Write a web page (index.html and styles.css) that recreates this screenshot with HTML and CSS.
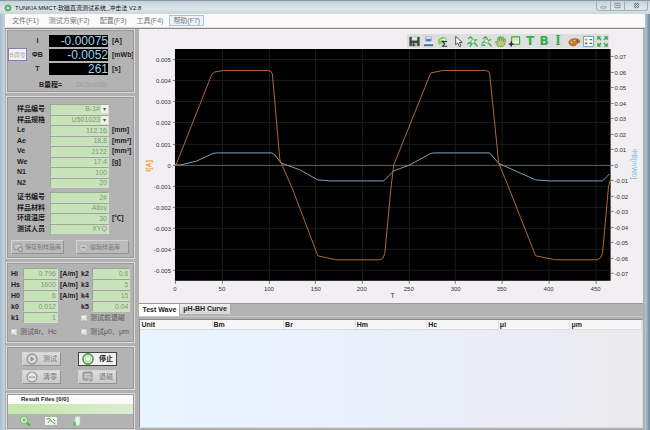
FILE: index.html
```html
<!DOCTYPE html>
<html lang="zh-CN">
<head>
<meta charset="utf-8">
<title>TUNKIA MMCT</title>
<link rel="stylesheet" href="styles.css">
</head>
<body>
<div class="window">
  <header class="titlebar">
    <svg class="logo" viewBox="0 0 10 10" aria-hidden="true"><circle cx="5" cy="5" r="2.6" fill="none" stroke="#4fa857" stroke-width="1.8"/><path d="M5 0v2M5 8v2M0 5h2M8 5h2M1.4 1.4l1.5 1.5M7.1 7.1l1.5 1.5M1.4 8.6l1.5-1.5M7.1 2.9l1.5-1.5" stroke="#4fa857" stroke-width="1.3"/></svg>
    <h1>TUNKIA MMCT-软磁直流测试系统_冲击法 V2.8</h1>
    <div class="winctl">
      <button aria-label="Minimize"><svg viewBox="0 0 8 8"><path d="M1 5.5h6v1.5H1z" fill="#fff" stroke="#777" stroke-width=".7"/></svg></button>
      <button aria-label="Maximize"><svg viewBox="0 0 8 8"><path d="M1.2 1.5h5.6v5H1.2zM3 3.2h2v1.6H3z" fill="#fff" stroke="#666" stroke-width=".8"/></svg></button>
      <button class="close" aria-label="Close"><svg viewBox="0 0 8 8"><path d="M1.5 1.5l5 5M6.5 1.5l-5 5" stroke="#666" stroke-width="2.4"/><path d="M1.5 1.5l5 5M6.5 1.5l-5 5" stroke="#fff" stroke-width=".9"/></svg></button>
    </div>
  </header>
  <nav class="menu">
    <button>文件(F1)</button><button>测试方案(F2)</button><button>配置(F3)</button><button>工具(F4)</button><button class="hot">帮助(F7)</button>
  </nav>
  <main class="work">
    <aside class="side">
      <section class="panel meters">
        <button class="zero">B调零</button>
        <div class="meter-grid">
          <span>I</span><output>-0.00075</output><b>[A]</b>
          <span>ΦB</span><output>-0.0052</output><b>[mWb]</b>
          <span>T</span><output>261</output><b>[s]</b>
        </div>
        <div class="range"><b>B量程=</b><span>DC5mWb</span></div>
      </section>

      <section class="panel sample">
        <div class="fields eight">
          <label for="f1">样品编号</label><span class="drop"><select id="f1"><option>B-1#</option></select></span><b></b>
          <label for="f2">样品规格</label><span class="drop"><select id="f2"><option>U501023</option></select></span><b></b>
          <label for="f3">Le</label><input id="f3" value="112.16"><b>[mm]</b>
          <label for="f4">Ae</label><input id="f4" value="18.8"><b>[mm²]</b>
          <label for="f5">Ve</label><input id="f5" value="2122"><b>[mm³]</b>
          <label for="f6">We</label><input id="f6" value="17.4"><b>[g]</b>
          <label for="f7">N1</label><input id="f7" value="100"><b></b>
          <label for="f8">N2</label><input id="f8" value="20"><b></b>
        </div>
        <div class="fields four">
          <label for="g1">证书编号</label><input id="g1" value="2#"><b></b>
          <label for="g2">样品材料</label><input id="g2" value="Alloy"><b></b>
          <label for="g3">环境温度</label><input id="g3" value="30"><b>[℃]</b>
          <label for="g4">测试人员</label><input id="g4" value="XYQ"><b></b>
        </div>
        <div class="pair">
          <button class="btn small"><svg viewBox="0 0 12 12"><rect x="1" y="2" width="8" height="6" rx="1" fill="#c8c8c8" stroke="#909090"/><circle cx="8" cy="8" r="2.5" fill="#bbb" stroke="#8c8c8c"/></svg>保存到样品库</button>
          <button class="btn small"><svg viewBox="0 0 12 12"><circle cx="6" cy="6" r="4.8" fill="#c6c6c6" stroke="#aaa"/><path d="M4 5.5h4v1.2H4z" fill="#888"/></svg>编辑样品库</button>
        </div>
      </section>

      <section class="panel coef">
        <div class="coef-grid">
          <label for="h1">Hi</label><input id="h1" value="0.796"><b>[A/m]</b><label for="h2">k2</label><input id="h2" value="0.6">
          <label for="h3">Hs</label><input id="h3" value="1600"><b>[A/m]</b><label for="h4">k3</label><input id="h4" value="5">
          <label for="h5">H0</label><input id="h5" value="6"><b>[A/m]</b><label for="h6">k4</label><input id="h6" value="15">
          <label for="h7">k0</label><input id="h7" value="0.012"><b></b><label for="h8">k5</label><input id="h8" value="0.04">
          <label for="h9">k1</label><input id="h9" value="1"><b></b><label class="check span"><input type="checkbox" checked>测试前退磁</label>
        </div>
        <div class="checks">
          <label class="check"><input type="checkbox" checked>测试Br、Hc</label>
          <label class="check"><input type="checkbox" checked>测试μ0、μm</label>
        </div>
      </section>

      <section class="panel actions">
        <button class="btn"><svg viewBox="0 0 12 12"><circle cx="6" cy="6" r="5" fill="#d8d8d8" stroke="#979797" stroke-width="1.4"/><path d="M4.6 3.4L8.4 6 4.6 8.6z" fill="#8e8e8e"/></svg><span>测试</span></button>
        <button class="btn live"><svg viewBox="0 0 12 12"><circle cx="6" cy="6" r="5" fill="#fff" stroke="#51a548" stroke-width="1.8"/><rect x="3.8" y="3.8" width="4.4" height="4.4" fill="#fff" stroke="#8ccf83" stroke-width=".8"/></svg><span>停止</span></button>
        <button class="btn"><svg viewBox="0 0 12 12"><circle cx="6" cy="6" r="5" fill="#e3e3e3" stroke="#979797" stroke-width="1.2"/><path d="M3 5.4h1.6v1.4H3zM5.3 5.4h1.4v1.4H5.3zM7.4 5.4H9v1.4H7.4z" fill="#888"/></svg><span>清零</span></button>
        <button class="btn"><svg viewBox="0 0 12 12"><rect x="1" y="1" width="9" height="8" rx="1" fill="#aaa" stroke="#919191"/><path d="M2.5 3.5h6M2.5 6h6" stroke="#ddd"/><circle cx="9" cy="9" r="2.3" fill="#a5a5a5" stroke="#ddd" stroke-width=".6"/></svg><span>退磁</span></button>
      </section>

      <section class="panel files">
        <h2>Result Files [0/0]</h2>
        <div class="file-row"></div>
        <div class="file-tools">
          <button aria-label="Search"><svg viewBox="0 0 12 12"><path d="M7 7l4 3.5" stroke="#4caf50" stroke-width="2"/><circle cx="5" cy="5" r="3.6" fill="#e4f7df" stroke="#76c36d" stroke-width="1.4"/><path d="M5 3v4M3 5h4" stroke="#58ae52"/></svg></button>
          <button aria-label="Curve"><svg viewBox="0 0 12 12"><rect x="0" y="2" width="12" height="8" fill="#eaf5e4"/><path d="M1.5 4l3-.5L7 7l3.5 2M3 8l2-3M8 4l2 2" fill="none" stroke="#60a558"/></svg></button>
          <button aria-label="Copy"><svg viewBox="0 0 12 12"><path d="M4 2l5-1v9l-5 1z" fill="#e5f6e9" stroke="#9bceaa" stroke-width=".7"/><path d="M2 7h3v4H2z" fill="#67bd76"/></svg></button>
        </div>
      </section>
    </aside>

    <div class="content">
      <section class="chart">
        <div class="toolbar">
          <div class="group">
            <button aria-label="Save"><svg viewBox="0 0 14 14"><path d="M1.5 2h11v10h-11z" fill="#3a453c"/><path d="M4 2h6v4H4z" fill="#dfe6df"/><path d="M4 8.5h6V12H4z" fill="#a6b8a5"/><path d="M5 9h2v3H5z" fill="#2c352e"/></svg></button>
            <button aria-label="Print"><svg viewBox="0 0 14 14"><path d="M4 2h6v5H4z" fill="#fff" stroke="#777" stroke-width=".6"/><path d="M4.5 4h5v3h-5z" fill="#447bd0"/><path d="M1.5 7h11l-1 3h-9z" fill="#e3ebf3"/><path d="M2 10h10v2H2z" fill="#4669a0"/></svg></button>
            <button aria-label="Export"><svg viewBox="0 0 14 14"><path d="M2 5l4-3 5 1-1 5-7 3z" fill="#8fd079"/><path d="M3 8c1-4 3-4 5-4V2l3 3-3 3V6C6 6 5 6 3 8z" fill="#f7fff2" stroke="#4a963c" stroke-width=".6"/><path d="M12 7H7l2.5 2.5L7 12h5" fill="none" stroke="#26332a" stroke-width="1.1"/></svg></button>
          </div>
          <div class="group">
            <button aria-label="Pointer"><svg viewBox="0 0 14 14"><path d="M4 1.5v9l2.3-2 1.7 4 1.7-.8L8 8h3z" fill="#fff" stroke="#333" stroke-width=".9"/></svg></button>
            <button aria-label="Zoom in"><svg viewBox="0 0 14 14"><path d="M2 4l3-2 2 2M1.500 10l2.500-2 2 2-2 2.500M9 8.500l3.500 3.500M8 6l4-1" fill="none" stroke="#37b24c" stroke-width="1.500"/><circle cx="7.500" cy="7" r="2.100" fill="#d8f3d9" stroke="#54a65b" stroke-width=".8"/></svg></button>
            <button aria-label="Zoom out"><svg viewBox="0 0 14 14"><path d="M3 4l3-2 2 2M1.500 11h4M2 9l3-2M9 8.500l3.500 3.500M8 6l4-1" fill="none" stroke="#37b24c" stroke-width="1.500"/><circle cx="7" cy="6.500" r="2.100" fill="#d8f3d9" stroke="#54a65b" stroke-width=".8"/></svg></button>
            <button aria-label="Pan"><svg viewBox="0 0 14 14"><path d="M4 12L1.5 7.5l1-1L4 8V3l1.3-.5L6 6V1.6h1.4L8 6l.8-4L10 2.3V7l1-3 1.3.5L11.5 10l-2 2.5z" fill="#d3bf7c" stroke="#3fae50" stroke-width=".9"/></svg></button>
            <button aria-label="Select region"><svg viewBox="0 0 14 14"><path d="M4 2h8.5v8H4z" fill="#e7f7d9" stroke="#4a9846" stroke-width="1.2"/><path d="M5.5 3.5h5.5V6H5.5z" fill="#c5e8b0"/><path d="M3.5 7v5.5M.8 9.8h5.5" stroke="#222" stroke-width="1.5"/></svg></button>
          </div>
          <div class="group letters">
            <button class="sans">T</button><button class="sans">B</button><button class="serif">I</button>
          </div>
          <div class="group">
            <button aria-label="Palette"><svg viewBox="0 0 14 14"><path d="M1 8c0-3 4-4.5 8-4 4 .6 5 3.500 2.500 4.500-1.500.5-2 0-2.500 1.500-.6 2-2.500 2-4.500 1.600C2.500 11 1 10 1 8z" fill="#b97b2c" stroke="#80521d" stroke-width=".6"/><circle cx="4" cy="8" r="1" fill="#e8d489"/><circle cx="7" cy="6" r="1" fill="#efd69b"/><circle cx="10" cy="6.500" r=".9" fill="#654119"/></svg></button>
            <button aria-label="Legend"><svg viewBox="0 0 14 14"><path d="M1.500 1.500h11v11h-11z" fill="#fff" stroke="#55a5a0"/><path d="M3 4h3v2H3z" fill="#e99b34"/><path d="M3 8h3v2H3z" fill="#4a83cf"/><path d="M8 5h3M8 9h3" stroke="#476" stroke-width="1.200"/></svg></button>
            <button aria-label="Fit"><svg viewBox="0 0 14 14"><path d="M2 5V2h3M9 2h3v3M12 9v3H9M5 12H2V9M2.500 2.500l3 3M11.500 2.500l-3 3M11.500 11.500l-3-3M2.500 11.500l3-3" fill="none" stroke="#35ad51" stroke-width="1.500"/></svg></button>
          </div>
        </div>
        <svg class="plot" viewBox="139 48 504 255" role="img" aria-label="Test Wave">
          <rect x="175" y="49" width="436" height="232" fill="#000"/>
          <path class="grid" d="M222.500 49v232M269.500 49v232M315.500 49v232M362.500 49v232M409.500 49v232M455.500 49v232M502.500 49v232M549.500 49v232M596.500 49v232M175 59.500h436M175 80.500h436M175 101.500h436M175 122.500h436M175 144.500h436M175 186.500h436M175 207.500h436M175 228.500h436M175 249.500h436M175 270.500h436"/>
          <path d="M175 165.500h436" stroke="#68682f"/>
          <path class="ticks" d="M173 59.500h2M173 80.500h2M173 101.500h2M173 122.500h2M173 144.500h2M173 165.500h2M173 186.500h2M173 207.500h2M173 228.500h2M173 249.500h2M173 270.500h2M175.500 281v3M222.500 281v3M269.500 281v3M315.500 281v3M362.500 281v3M409.500 281v3M455.500 281v3M502.500 281v3M549.500 281v3M596.500 281v3M611 56.500h3M611 72.500h3M611 87.500h3M611 103.500h3M611 118.500h3M611 134.500h3M611 149.500h3M611 165.500h3M611 180.500h3M611 196.500h3M611 211.500h3M611 227.500h3M611 242.500h3M611 258.500h3M611 273.500h3"/>
          <polyline class="blue" points="175,165 181,165 197,161 213,153.500 217,153 272,153 275,155 281,163 300,170 318,180 330,181 384,181 394,171 410,165 431,153.500 435,153 490,153 499,163.500 518,172 536,180 550,181 603,181 610,174"/>
          <polyline class="orange" points="176,165 212,74 215,72 224,70.500 268,70.500 271,71.500 272.500,74 280,160 293,190 318,256 336,260 380,260 383,258.500 385,254 391,190 394,165 431,73 443,70.500 486,70.500 489,71.500 490,74 499,163 510,190 536,256 556,260 597,260 601,258 603,253 609,186 611,180"/>
          <g class="num left">
            <text x="171" y="62">0.005</text><text x="171" y="83">0.004</text><text x="171" y="104">0.003</text><text x="171" y="125">0.002</text><text x="171" y="147">0.001</text><text x="171" y="168">0</text><text x="171" y="189">-0.001</text><text x="171" y="210">-0.002</text><text x="171" y="231">-0.003</text><text x="171" y="252">-0.004</text><text x="171" y="273">-0.005</text>
          </g>
          <g class="num">
            <text x="615" y="59">0.07</text><text x="615" y="75">0.06</text><text x="615" y="90">0.05</text><text x="615" y="106">0.04</text><text x="615" y="121">0.03</text><text x="615" y="137">0.02</text><text x="615" y="152">0.01</text><text x="615" y="168">0</text><text x="615" y="183">-0.01</text><text x="615" y="199">-0.02</text><text x="615" y="214">-0.03</text><text x="615" y="230">-0.04</text><text x="615" y="245">-0.05</text><text x="615" y="261">-0.06</text><text x="615" y="276">-0.07</text>
          </g>
          <g class="num mid">
            <text x="175" y="291">0</text><text x="222" y="291">50</text><text x="269" y="291">100</text><text x="316" y="291">150</text><text x="362" y="291">200</text><text x="409" y="291">250</text><text x="456" y="291">300</text><text x="502" y="291">350</text><text x="549" y="291">400</text><text x="596" y="291">450</text>
          </g>
          <text class="axis" x="393" y="298">T</text>
          <text class="axis amp" transform="translate(151 166) rotate(-90)">I[A]</text>
          <text class="axis flux" transform="translate(632 164) rotate(90)">ΦB[mWb]</text>
        </svg>
      </section>
      <div class="tabs" role="tablist">
        <button role="tab" class="on" aria-selected="true">Test Wave</button><button role="tab" aria-selected="false">μH-BH Curve</button>
      </div>
      <div class="results">
        <table>
          <thead><tr><th>Unit</th><th>Bm</th><th>Br</th><th>Hm</th><th>Hc</th><th>μi</th><th>μm</th></tr></thead>
          <tbody></tbody>
        </table>
      </div>
    </div>
  </main>
</div>
</body>
</html>
```
FILE: styles.css
```css
* { box-sizing: border-box; }
html, body { margin: 0; height: 100%; }
body {
  font: 7px/8px "Liberation Sans", "Noto Sans CJK SC", sans-serif;
  color: #222;
  overflow: hidden;
}
button, input, select, output { font: inherit; color: inherit; }
button { padding: 0; border: 0; background: none; white-space: nowrap; }
svg { display: block; }

.window {
  display: flex;
  flex-direction: column;
  height: 100vh;
  padding: 0 5px;
  background: linear-gradient(90deg, #a9bccd 0, #c3d1dc 4px, #c3d1dc 5px, transparent 5px, transparent calc(100% - 5px), #b9c9d3 calc(100% - 5px), #70889b 100%), #b3b2b3;
}

.titlebar {
  display: flex;
  align-items: center;
  gap: 3px;
  height: 14px;
  margin: 0 -5px;
  padding: 0 2px 0 4px;
  background: linear-gradient(#c3d3dc, #dce6eb 60%, #cbd7de);
  border-top: 1px solid #8b979f;
}
.logo { width: 8px; height: 8px; }
h1 { margin: 0; flex: 1; font-size: 6px; font-weight: 400; color: #111; }
.winctl { display: flex; align-self: flex-start; border: 1px solid #a5afb6; border-top: 0; border-radius: 0 0 3px 3px; }
.winctl button { display: grid; place-items: center; width: 14px; height: 9px; border-right: 1px solid #a5afb6; }
.winctl .close { width: 22px; border: 0; }
.winctl svg { width: 7px; height: 7px; }

.menu {
  display: flex;
  gap: 2px;
  height: 14px;
  padding: 1px 3px;
  background: #fbf9fa;
  border-bottom: 1px solid #ddd;
  color: #777;
}
.menu button { padding: 0 3px; border: 1px solid transparent; }
.menu .hot { border-color: #a5c5dc; background: #edf5fb; }

.work { display: flex; flex: 1; min-height: 0; border-top: 1px solid #888; background: #b1b0b1; }
.side { display: flex; flex-direction: column; gap: 3px; flex: 0 0 131px; padding-left: 1px; }
.panel { flex: none; border: 1px solid #dadada; outline: 1px solid #9a9a9a; outline-offset: -2px; background: #b4b3b4; margin-right: 1px; }
.side b, .side label { font-weight: 700; color: #1c1c1c; }

.meters { position: relative; height: 64px; padding: 5px 0 0 21px; }
.zero { position: absolute; left: 1px; top: 18px; width: 19px; height: 13px; border: 1px solid #7f80bb; background: #f2f2f5; font-size: 6px; color: #aaa; }
.meter-grid { display: grid; grid-template-columns: 19px 59px 1fr; grid-auto-rows: 12px; row-gap: 2px; column-gap: 2px; align-items: center; }
.meter-grid span { text-align: center; font-weight: 700; }
.meter-grid output { height: 12px; background: #000; color: #9fd0ec; font-size: 12px; line-height: 13px; text-align: right; }
.meter-grid b { padding-left: 2px; }
.range { display: flex; gap: 14px; padding: 6px 0 0 11px; }
.range span { color: #9b9b9b; }

.sample { padding: 7px 3px 4px 10px; }
.fields { display: grid; grid-template-columns: 32px 59px 1fr; column-gap: 1px; align-items: stretch; line-height: 10px; }
.fields b { padding-left: 2px; }
.eight { grid-template-rows: repeat(8, 1fr); height: 84px; }
.four { grid-template-rows: repeat(4, 1fr); height: 42px; margin-top: 4px; }
.side input:not([type]), select {
  width: 100%; height: 100%; min-width: 0; min-height: 0;
  margin: 0; padding: 0 1px;
  border: 1px solid #9aa595; border-right-color: #d5dcd2; border-bottom-color: #d5dcd2; border-radius: 0;
  background: #c7e4b9; color: #84967e;
  text-align: right; line-height: 8px;
}
select { appearance: none; padding-right: 8px; text-align-last: right; }
.drop { position: relative; min-height: 0; display: block; }
.drop::after { content: "▾"; position: absolute; right: 1px; top: 1px; width: 7px; height: 8px; background: #eef3ec; color: #555; line-height: 8px; text-align: center; font-size: 6px; }
.pair { display: flex; gap: 12px; margin: 6px 0 0 -6px; }
.btn { display: flex; align-items: center; height: 14px; padding: 0 3px; border: 1px solid #d5d5d5; border-right-color: #929292; border-bottom-color: #929292; background: linear-gradient(#dedede, #cacaca); color: #777; gap: 5px; }
.btn svg { flex: none; width: 12px; height: 12px; }
.small { width: 53px; gap: 1px; padding: 0 1px; font-size: 6px; background: #bcbbbc; }
.small svg { width: 11px; height: 11px; }

.coef { padding: 5px 4px; }
.coef-grid { display: grid; grid-template-columns: 12px 35px 23px 11px 1fr; grid-auto-rows: 11px; line-height: 11px; }
.coef-grid b { padding-left: 2px; }
.check { display: flex; align-items: center; gap: 3px; }
.side .check { font-weight: 400; color: #555; }
.span { grid-column: span 2; }
.check input { appearance: none; flex: none; width: 6px; height: 6px; margin: 0; border: 1px solid #ccc; background: #f2f2f2; position: relative; }
.check input:checked::before { content: "✓"; position: absolute; left: 0; top: -2px; font-size: 5px; color: #999; }
.checks { display: grid; grid-template-columns: 70px 1fr; padding-top: 4px; line-height: 10px; }

.actions { display: grid; grid-template-columns: 39px 39px; justify-content: start; column-gap: 17px; row-gap: 4px; padding: 5px 15px; }
.live { border: 1px solid #444; background: #f1f1f1; color: #222; font-weight: 700; }

.files { flex: 1; min-height: 0; padding: 1px; }
.files h2 { margin: 0; padding: 0 13px; font-size: 6px; line-height: 9px; background: #fbfbfb; }
.file-row { height: 10px; background: linear-gradient(90deg, #c3e8aa, #dcebd2); }
.file-tools { display: flex; gap: 14px; padding: 1px 11px; }
.file-tools svg { width: 12px; height: 12px; }

.content { display: flex; flex-direction: column; flex: 1; min-width: 0; margin-left: 3px; padding-right: 2px; padding-bottom: 2px; }
.chart { padding-top: 5px; background: #f1eff1; }
.toolbar { display: flex; gap: 2px; width: fit-content; margin-left: auto; margin-right: 34px; background: #dedddf; }
.group { display: flex; }
.group button { display: grid; place-items: center; width: 14px; height: 14px; }
.group svg { width: 13px; height: 13px; }
.letters { color: #2fae4b; font-weight: 900; font-size: 12px; line-height: 14px; }
.letters .serif { font-family: "Liberation Serif", serif; font-size: 14px; }
.letters .sans { font-family: "DejaVu Sans", sans-serif; }
.plot { width: 100%; height: auto; }
.grid { stroke: #1b1d1a; }
.ticks { stroke: #777; }
.blue, .orange { fill: none; stroke-width: 1; }
.blue { stroke: #7fa3bd; }
.orange { stroke: #ad693c; }
.num { font-size: 6px; fill: #333; }
.left { text-anchor: end; }
.mid { text-anchor: middle; }
.axis { font-size: 7px; text-anchor: middle; fill: #333; }
.amp { fill: #ef982d; font-weight: 700; }
.flux { fill: #77bce5; }

.tabs { display: flex; align-items: flex-start; height: 14px; margin-bottom: 2px; border-top: 1px solid #999; border-bottom: 1px solid #c9c9c9; background: #b4b3b4; font-weight: 700; }
.tabs button { height: 10px; padding: 0 3px; background: linear-gradient(#eee, #d5d5d5); border-right: 1px solid #aaa; }
.tabs .on { height: 12px; background: #fff; }

.results { flex: 1; min-height: 0; border: 1px solid #8e8e8e; border-right-color: #ddd; border-bottom-color: #ddd; background: linear-gradient(90deg, #e8f4ff, #e9f1fc 40%, #eaebf5 75%, #ebebed); }
table { width: 100%; table-layout: fixed; border-collapse: collapse; }
th { height: 10px; padding: 0 1px; text-align: left; background: #f7f7f8; border-right: 1px solid #ddd; border-bottom: 1px solid #ddd; }
```
